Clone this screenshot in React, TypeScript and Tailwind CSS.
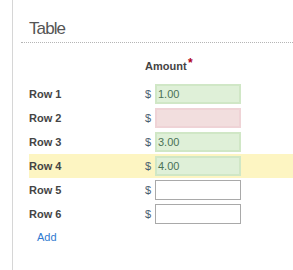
import React from "react";

type Row = {
    label: string;
    value: string;
    state: "valid" | "invalid" | "empty";
    highlight?: boolean;
};

const rows: Row[] = [
    { label: "Row 1", value: "1.00", state: "valid" },
    { label: "Row 2", value: "", state: "invalid" },
    { label: "Row 3", value: "3.00", state: "valid" },
    { label: "Row 4", value: "4.00", state: "valid", highlight: true },
    { label: "Row 5", value: "", state: "empty" },
    { label: "Row 6", value: "", state: "empty" },
];

const inputStyles = {
    valid: "border-2 border-[#d0e7c6] bg-[#dff0d8]",
    invalid: "border-2 border-[#efd3d6] bg-[#f2dede]",
    empty: "border border-[#a9a9a9] bg-white",
};

export default function App() {
    return (
        <div className="h-[270px] w-[293px] bg-white font-['Liberation_Sans',Arial,sans-serif] overflow-hidden">
            <div className="ml-3 h-full border-l border-[#d6d6d6] pl-2">
                <div className="border-b border-dotted border-[#b5b5b5] pb-[3px] pl-2 pt-[19px]">
                    <h2 className="text-[17px] leading-5 tracking-[-0.9px] text-[#555]">Table</h2>
                </div>

                <div className="mt-[11px] pl-2">
                    <div className="flex h-6 items-center text-[11px] font-bold text-[#444]">
                        <div className="w-[116px]" />
                        <span className="relative">
                            Amount
                            <span className="absolute -right-[6px] -top-[4px] text-[12px] text-[#b0001e]">*</span>
                        </span>
                    </div>

                    <div className="mt-1">
                        {rows.map((row) => (
                            <div
                                key={row.label}
                                className={`flex h-6 items-center ${row.highlight ? "bg-[#fdf5c2]" : ""}`}
                            >
                                <div className="w-[116px] text-[11px] font-bold text-[#444]">{row.label}</div>
                                <span className="w-[10px] text-[11px] text-[#4a5d70]">$</span>
                                <div
                                    className={`flex h-5 w-[86px] items-center pl-[1px] text-[11px] text-[#4b7256] ${inputStyles[row.state]}`}
                                >
                                    {row.value}
                                </div>
                            </div>
                        ))}
                    </div>

                    <a href="#" className="mt-[5px] block pl-2 text-[11px] leading-[13px] text-[#2f7ad0]">
                        Add
                    </a>
                </div>
            </div>
        </div>
    );
}
